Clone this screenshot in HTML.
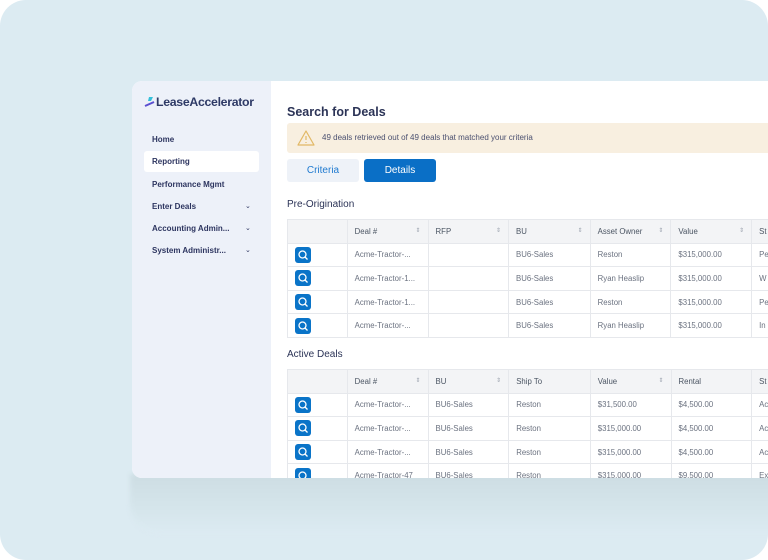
<!DOCTYPE html>
<html><head><meta charset="utf-8"><style>
*{margin:0;padding:0;box-sizing:border-box}
body{width:768px;height:560px;background:#fff;font-family:"Liberation Sans",sans-serif;overflow:hidden;position:relative}
.bg{position:absolute;left:0;top:0;width:768px;height:560px;background:#dcebf2;border-radius:26px;overflow:hidden}
.shadow{position:absolute;left:130px;top:474px;width:660px;height:60px;background:linear-gradient(#cddde3,#d5e5eb 55%,#dcebf2);border-radius:0 0 0 30px;filter:blur(2px)}
.screen{position:absolute;left:132px;top:81px;width:660px;height:397px;background:#fff;border-radius:10px 0 0 10px;overflow:hidden}
.side{position:absolute;left:0;top:0;width:139px;height:397px;background:#edf1f9}
.logo{position:absolute;left:12px;top:13px;font-size:12.3px;color:#2e3a66;font-weight:bold;letter-spacing:-0.3px}
.nav{position:absolute;left:20px;font-size:8px;font-weight:bold;color:#2d3560}
.nav .ch{position:absolute;left:93px;top:0;font-weight:normal;font-size:7px}
.hl{position:absolute;left:12px;top:70px;width:115px;height:21px;background:#fff;border-radius:3px}
.t{position:absolute;white-space:nowrap}
.alert{position:absolute;left:155px;top:42px;width:520px;height:30px;background:#f8efe0;border-radius:3px}
.tab{position:absolute;top:78px;width:72px;height:23px;border-radius:3px;font-size:10px;text-align:center;line-height:23px}
table{position:absolute;left:155px;border-collapse:collapse;font-size:7.8px;color:#6b7280}
td,th{border:1px solid #e6e8ec;height:23.6px;padding:0 0 0 7px;text-align:left;white-space:nowrap;overflow:hidden}
th{background:#f3f4f6;font-weight:normal;color:#4b5563;position:relative}
th .s{position:absolute;right:7px;top:7px;font-size:6px;color:#9ca3af}
.ib{display:inline-block;width:16px;height:16px;background:#0a74c8;border-radius:3px;vertical-align:middle;position:relative}
.ib svg{position:absolute;left:2px;top:2px}
</style></head><body>
<div class="bg">
<div class="shadow"></div>
<div class="screen">
 <div class="side">
  <div class="logo"><svg width="12" height="14" viewBox="0 0 12 14" style="vertical-align:-2px"><path d="M5 3h4l-2 4h-3z" fill="#35c0d9"/><path d="M1 12L10 8" stroke="#5b4fd0" stroke-width="2"/></svg>LeaseAccelerator</div>
  <div class="hl"></div>
  <div class="nav" style="top:54px">Home</div>
  <div class="nav" style="top:76px">Reporting</div>
  <div class="nav" style="top:99px">Performance Mgmt</div>
  <div class="nav" style="top:121px">Enter Deals<span class="ch">⌄</span></div>
  <div class="nav" style="top:143px">Accounting Admin...<span class="ch">⌄</span></div>
  <div class="nav" style="top:165px">System Administr...<span class="ch">⌄</span></div>
 </div>
 <div class="t" style="left:155px;top:24px;font-size:12.5px;font-weight:bold;color:#2b3356">Search for Deals</div>
 <div class="alert"><svg style="position:absolute;left:10px;top:7px" width="18" height="16" viewBox="0 0 18 16"><path d="M9 1L17 15H1Z" fill="none" stroke="#e2b865" stroke-width="1.2" stroke-linejoin="round"/><path d="M9 6v4M9 12v1" stroke="#e2b865" stroke-width="1.2"/></svg><span class="t" style="left:35px;top:10px;font-size:8px;color:#4b5070">49 deals retrieved out of 49 deals that matched your criteria</span></div>
 <div class="tab" style="left:155px;background:#eef2f8;color:#1f7ad0">Criteria</div>
 <div class="tab" style="left:232px;background:#0a6fc6;color:#fff">Details</div>
 <div class="t" style="left:155px;top:118px;font-size:10px;color:#2b3356">Pre-Origination</div>
 <table style="top:138px">
  <tr><th style="width:60px"></th><th style="width:81px">Deal #<span class="s">⇕</span></th><th style="width:81px">RFP<span class="s">⇕</span></th><th style="width:82px">BU<span class="s">⇕</span></th><th style="width:81px">Asset Owner<span class="s">⇕</span></th><th style="width:81px">Value<span class="s">⇕</span></th><th style="width:40px">St</th></tr>
  <tr><td><span class="ib"><svg width="12" height="12"><circle cx="5.5" cy="5.5" r="3.5" fill="none" stroke="#fff" stroke-width="1.3"/><path d="M8 8l2.5 2.5" stroke="#fff" stroke-width="1.3"/></svg></span></td><td>Acme-Tractor-...</td><td></td><td>BU6-Sales</td><td>Reston</td><td>$315,000.00</td><td>Pe</td></tr>
  <tr><td><span class="ib"><svg width="12" height="12"><circle cx="5.5" cy="5.5" r="3.5" fill="none" stroke="#fff" stroke-width="1.3"/><path d="M8 8l2.5 2.5" stroke="#fff" stroke-width="1.3"/></svg></span></td><td>Acme-Tractor-1...</td><td></td><td>BU6-Sales</td><td>Ryan Heaslip</td><td>$315,000.00</td><td>W</td></tr>
  <tr><td><span class="ib"><svg width="12" height="12"><circle cx="5.5" cy="5.5" r="3.5" fill="none" stroke="#fff" stroke-width="1.3"/><path d="M8 8l2.5 2.5" stroke="#fff" stroke-width="1.3"/></svg></span></td><td>Acme-Tractor-1...</td><td></td><td>BU6-Sales</td><td>Reston</td><td>$315,000.00</td><td>Pe</td></tr>
  <tr><td><span class="ib"><svg width="12" height="12"><circle cx="5.5" cy="5.5" r="3.5" fill="none" stroke="#fff" stroke-width="1.3"/><path d="M8 8l2.5 2.5" stroke="#fff" stroke-width="1.3"/></svg></span></td><td>Acme-Tractor-...</td><td></td><td>BU6-Sales</td><td>Ryan Heaslip</td><td>$315,000.00</td><td>In</td></tr>
 </table>
 <div class="t" style="left:155px;top:268px;font-size:10px;color:#2b3356">Active Deals</div>
 <table style="top:288px">
  <tr><th style="width:60px"></th><th style="width:81px">Deal #<span class="s">⇕</span></th><th style="width:81px">BU<span class="s">⇕</span></th><th style="width:82px">Ship To</th><th style="width:81px">Value<span class="s">⇕</span></th><th style="width:81px">Rental</th><th style="width:40px">St</th></tr>
  <tr><td><span class="ib"><svg width="12" height="12"><circle cx="5.5" cy="5.5" r="3.5" fill="none" stroke="#fff" stroke-width="1.3"/><path d="M8 8l2.5 2.5" stroke="#fff" stroke-width="1.3"/></svg></span></td><td>Acme-Tractor-...</td><td>BU6-Sales</td><td>Reston</td><td>$31,500.00</td><td>$4,500.00</td><td>Ac</td></tr>
  <tr><td><span class="ib"><svg width="12" height="12"><circle cx="5.5" cy="5.5" r="3.5" fill="none" stroke="#fff" stroke-width="1.3"/><path d="M8 8l2.5 2.5" stroke="#fff" stroke-width="1.3"/></svg></span></td><td>Acme-Tractor-...</td><td>BU6-Sales</td><td>Reston</td><td>$315,000.00</td><td>$4,500.00</td><td>Ac</td></tr>
  <tr><td><span class="ib"><svg width="12" height="12"><circle cx="5.5" cy="5.5" r="3.5" fill="none" stroke="#fff" stroke-width="1.3"/><path d="M8 8l2.5 2.5" stroke="#fff" stroke-width="1.3"/></svg></span></td><td>Acme-Tractor-...</td><td>BU6-Sales</td><td>Reston</td><td>$315,000.00</td><td>$4,500.00</td><td>Ac</td></tr>
  <tr><td><span class="ib"><svg width="12" height="12"><circle cx="5.5" cy="5.5" r="3.5" fill="none" stroke="#fff" stroke-width="1.3"/><path d="M8 8l2.5 2.5" stroke="#fff" stroke-width="1.3"/></svg></span></td><td>Acme-Tractor-47</td><td>BU6-Sales</td><td>Reston</td><td>$315,000.00</td><td>$9,500.00</td><td>Ex</td></tr>
 </table>
</div>
</div>
</body></html>
